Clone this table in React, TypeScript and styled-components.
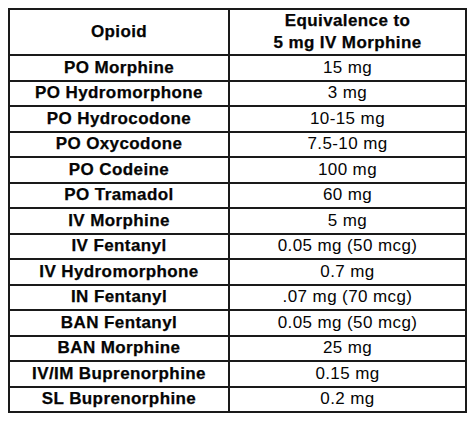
import React from "react";
import styled, { createGlobalStyle } from "styled-components";

const Global = createGlobalStyle`
  html, body { margin: 0; padding: 0; background: #ffffff; }
  body { padding: 8px; }
`;

const Table = styled.table`
  border-collapse: collapse;
  width: 459px;
  table-layout: fixed;
  font-family: "Liberation Sans", Arial, Helvetica, sans-serif;
  color: #050505;
  letter-spacing: 0.4px;
  border: 2px solid #1a1a1a;
`;

const HeadCell = styled.th`
  height: 44px;
  padding: 0;
  border: 2px solid #1a1a1a;
  font-size: 17px;
  font-weight: 700;
  line-height: 22px;
  text-align: center;
  vertical-align: middle;
  -webkit-text-stroke: 0.25px #050505;
`;

const Cell = styled.td<{ $bold?: boolean }>`
  height: 23.5px;
  padding: 0;
  border: 2px solid #1a1a1a;
  font-size: 17px;
  font-weight: ${(p) => (p.$bold ? 700 : 400)};
  -webkit-text-stroke: ${(p) => (p.$bold ? "0.25px #050505" : "0")};
  line-height: 20px;
  text-align: center;
  vertical-align: middle;
  white-space: nowrap;
`;

const rows: [string, string][] = [
  ["PO Morphine", "15 mg"],
  ["PO Hydromorphone", "3 mg"],
  ["PO Hydrocodone", "10-15 mg"],
  ["PO Oxycodone", "7.5-10 mg"],
  ["PO Codeine", "100 mg"],
  ["PO Tramadol", "60 mg"],
  ["IV Morphine", "5 mg"],
  ["IV Fentanyl", "0.05 mg (50 mcg)"],
  ["IV Hydromorphone", "0.7 mg"],
  ["IN Fentanyl", ".07 mg (70 mcg)"],
  ["BAN Fentanyl", "0.05 mg (50 mcg)"],
  ["BAN Morphine", "25 mg"],
  ["IV/IM Buprenorphine", "0.15 mg"],
  ["SL Buprenorphine", "0.2 mg"],
];

export default function App() {
  return (
    <>
      <Global />
      <Table>
        <colgroup>
          <col style={{ width: "220px" }} />
          <col />
        </colgroup>
        <thead>
          <tr>
            <HeadCell>Opioid</HeadCell>
            <HeadCell>
              Equivalence to
              <br />5 mg IV Morphine
            </HeadCell>
          </tr>
        </thead>
        <tbody>
          {rows.map(([name, dose]) => (
            <tr key={name}>
              <Cell $bold>{name}</Cell>
              <Cell>{dose}</Cell>
            </tr>
          ))}
        </tbody>
      </Table>
    </>
  );
}
